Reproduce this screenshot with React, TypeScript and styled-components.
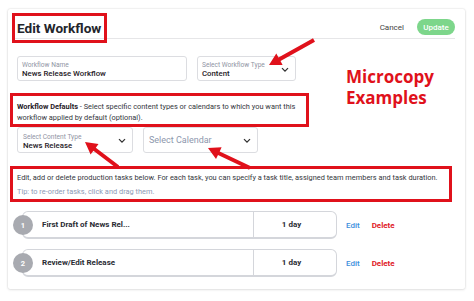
import React from 'react'
import styled, { createGlobalStyle } from 'styled-components'

const GlobalStyle = createGlobalStyle`
  html, body {
    margin: 0;
    padding: 0;
    background: #ffffff;
    font-family: Roboto, "Liberation Sans", Arial, sans-serif;
    color: #2b2d33;
  }
`

const RED = '#e0111b'

const tasks = [
  { id: 1, title: 'First Draft of News Rel...', duration: '1 day' },
  { id: 2, title: 'Review/Edit Release', duration: '1 day' },
]

// tail -> tip pairs for the annotation arrows
const arrows = [
  { from: [314, 40], to: [269, 65] },
  { from: [118, 167], to: [85, 142] },
  { from: [250, 168], to: [208, 148] },
]

const arrowPoints = (from: number[], to: number[]) => {
  const dx = to[0] - from[0]
  const dy = to[1] - from[1]
  const len = Math.sqrt(dx * dx + dy * dy)
  const ux = dx / len
  const uy = dy / len
  const nx = -uy
  const ny = ux
  const head = 12
  const hw = 6.5
  const sw = 2
  const bx = to[0] - ux * head
  const by = to[1] - uy * head
  const pts = [
    [from[0] + nx * sw, from[1] + ny * sw],
    [bx + nx * sw, by + ny * sw],
    [bx + nx * hw, by + ny * hw],
    [to[0], to[1]],
    [bx - nx * hw, by - ny * hw],
    [bx - nx * sw, by - ny * sw],
    [from[0] - nx * sw, from[1] - ny * sw],
  ]
  return pts.map((p) => p[0].toFixed(1) + ',' + p[1].toFixed(1)).join(' ')
}

const Chevron = () => (
  <svg width='8' height='6' viewBox='0 0 8 6'>
    <path d='M1 1.5 L4 4.5 L7 1.5' fill='none' stroke='#333' strokeWidth='1.3' />
  </svg>
)

const Arrows = () => (
  <ArrowLayer width='474' height='301' viewBox='0 0 474 301'>
    {arrows.map((a, i) => (
      <polygon key={i} points={arrowPoints(a.from, a.to)} fill={RED} />
    ))}
  </ArrowLayer>
)

const App = () => {
  return (
    <Page>
      <GlobalStyle />
      <Card>
        <Header>
          <Title>Edit Workflow</Title>
          <Actions>
            <CancelButton>Cancel</CancelButton>
            <UpdateButton>Update</UpdateButton>
          </Actions>
        </Header>
        <Body>
          <TopGrid>
            <FormColumn>
              <FieldRow>
                <Field width={170}>
                  <FieldLabel>Workflow Name</FieldLabel>
                  <FieldValue>News Release Workflow</FieldValue>
                </Field>
                <Field width={99}>
                  <FieldLabel>Select Workflow Type</FieldLabel>
                  <FieldValue>Content</FieldValue>
                  <ChevronSlot>
                    <Chevron />
                  </ChevronSlot>
                </Field>
              </FieldRow>
              <Callout>
                <strong>Workflow Defaults</strong> - Select specific content types or calendars to which you want
                this workflow applied by default (optional).
              </Callout>
            </FormColumn>
            <Annotation>
              Microcopy
              <br />
              Examples
            </Annotation>
          </TopGrid>
          <FieldRow>
            <Field width={116} tall>
              <FieldLabel>Select Content Type</FieldLabel>
              <FieldValue>News Release</FieldValue>
              <ChevronSlot>
                <Chevron />
              </ChevronSlot>
            </Field>
            <Field width={115} tall>
              <Placeholder>Select Calendar</Placeholder>
              <ChevronSlot>
                <Chevron />
              </ChevronSlot>
            </Field>
          </FieldRow>
          <TaskNote>
            <div>
              Edit, add or delete production tasks below. For each task, you can specify a task title, assigned team
              members and task duration.
            </div>
            <Tip>Tip: to re-order tasks, click and drag them.</Tip>
          </TaskNote>
          <TaskList>
            {tasks.map((t) => (
              <TaskRow key={t.id}>
                <Badge>{t.id}</Badge>
                <TaskCard>
                  <TaskTitle>{t.title}</TaskTitle>
                  <Duration>{t.duration}</Duration>
                </TaskCard>
                <LinkButton>Edit</LinkButton>
                <LinkButton danger>Delete</LinkButton>
              </TaskRow>
            ))}
          </TaskList>
        </Body>
      </Card>
      <Arrows />
    </Page>
  )
}

const Page = styled.div`
  position: relative;
  width: 474px;
  height: 301px;
  padding: 9px 0 0 8px;
  box-sizing: border-box;
`

const ArrowLayer = styled.svg`
  position: absolute;
  left: 0;
  top: 0;
  pointer-events: none;
`

const Card = styled.div`
  width: 457px;
  height: 280px;
  box-sizing: border-box;
  background: #fff;
  border-radius: 2px;
  box-shadow: 0 0 2px rgba(0, 0, 0, 0.18), 0 1px 3px rgba(0, 0, 0, 0.08);
  display: flex;
  flex-direction: column;
`

const Header = styled.div`
  height: 29px;
  margin: 0 10px 0 4px;
  border-bottom: 1px solid #e6e6e8;
  display: flex;
  align-items: flex-start;
  justify-content: space-between;
`

const Title = styled.h1`
  margin: 4px 0 0 0;
  height: 30px;
  width: 95px;
  box-sizing: border-box;
  border: 3px solid ${RED};
  padding: 0 0 0 2px;
  display: flex;
  align-items: center;
  white-space: nowrap;
  font-size: 13.6px;
  font-weight: 700;
  color: #23252b;
  position: relative;
  z-index: 1;
`

const Actions = styled.div`
  display: flex;
  align-items: center;
  gap: 13px;
  margin-top: 10px;
`

const CancelButton = styled.span`
  font-size: 8px;
  color: #444;
`

const UpdateButton = styled.span`
  display: inline-flex;
  align-items: center;
  justify-content: center;
  width: 38px;
  height: 16px;
  border-radius: 8px;
  background: #7dd68b;
  color: #fff;
  font-size: 8px;
  font-weight: 500;
`

const Body = styled.div`
  padding: 17px 13px 0 2px;
  display: flex;
  flex-direction: column;
`

const TopGrid = styled.div`
  display: grid;
  grid-template-columns: 299px 1fr;
  column-gap: 37px;
`

const FormColumn = styled.div`
  display: flex;
  flex-direction: column;
  gap: 12px;
`

const FieldRow = styled.div`
  display: flex;
  gap: 10px;
  margin-left: 7px;
`

const Field = styled.div<{ width: number; tall?: boolean }>`
  position: relative;
  width: ${(p) => p.width}px;
  height: ${(p) => (p.tall ? 26 : 25)}px;
  box-sizing: border-box;
  border: 1px solid #dcdde1;
  border-radius: 3px;
  padding: ${(p) => (p.tall ? '5px 14px 0 5px' : '4px 14px 0 4px')};
  display: flex;
  flex-direction: column;
  justify-content: flex-start;
  background: #fff;
`

const FieldLabel = styled.span`
  font-size: 6.6px;
  line-height: 8px;
  color: #8f94a3;
  white-space: nowrap;
`

const FieldValue = styled.span`
  font-size: 7.8px;
  line-height: 10px;
  color: #1f2026;
  font-weight: 500;
  white-space: nowrap;
`

const Placeholder = styled.span`
  margin-top: 2px;
  font-size: 9px;
  line-height: 11px;
  color: #8d97ad;
`

const ChevronSlot = styled.span`
  position: absolute;
  right: 6px;
  top: 50%;
  transform: translateY(-40%);
  display: flex;
`

const Callout = styled.div`
  border: 3px solid ${RED};
  padding: 5px 4px 1px 4px;
  font-size: 7.4px;
  line-height: 11px;
  color: #34363c;
  height: 34px;
  box-sizing: border-box;

  strong {
    font-weight: 700;
    color: #1f2026;
  }
`

const Annotation = styled.div`
  margin-top: 10px;
  font-family: "Open Sans", "Liberation Sans", sans-serif;
  font-weight: 700;
  font-size: 17px;
  line-height: 21px;
  color: ${RED};
`

const TaskNote = styled.div`
  margin-top: 13px;
  border: 3px solid ${RED};
  height: 36px;
  box-sizing: border-box;
  padding: 2px 4px 0 4px;
  font-size: 7.4px;
  line-height: 14px;
  color: #34363c;
  white-space: nowrap;
`

const Tip = styled.div`
  color: #8d9ab5;
`

const TaskList = styled.div`
  margin-top: 9px;
  display: flex;
  flex-direction: column;
  gap: 10px;
  padding-left: 3px;
`

const TaskRow = styled.div`
  display: flex;
  align-items: center;
`

const Badge = styled.span`
  position: relative;
  z-index: 1;
  width: 20px;
  height: 20px;
  border-radius: 50%;
  background: #a8aab0;
  color: #fff;
  font-size: 7.5px;
  font-weight: 700;
  display: flex;
  align-items: center;
  justify-content: center;
`

const TaskCard = styled.div`
  margin-left: -11px;
  width: 315px;
  height: 28px;
  box-sizing: border-box;
  border: 1px solid #d4d6db;
  border-bottom-width: 2px;
  border-radius: 6px;
  display: grid;
  grid-template-columns: 1fr 83px;
  align-items: stretch;
`

const TaskTitle = styled.div`
  display: flex;
  align-items: center;
  padding-left: 19px;
  font-size: 8px;
  font-weight: 700;
  color: #2a2c33;
`

const Duration = styled.div`
  display: flex;
  align-items: center;
  justify-content: center;
  padding-right: 7px;
  border-left: 1px solid #d4d6db;
  font-size: 8px;
  font-weight: 700;
  color: #2a2c33;
`

const LinkButton = styled.span<{ danger?: boolean }>`
  margin-left: ${(p) => (p.danger ? 12 : 9)}px;
  font-size: 8px;
  font-weight: ${(p) => (p.danger ? 700 : 500)};
  color: ${(p) => (p.danger ? '#e0202a' : '#3d8fdc')};
`

export default App
